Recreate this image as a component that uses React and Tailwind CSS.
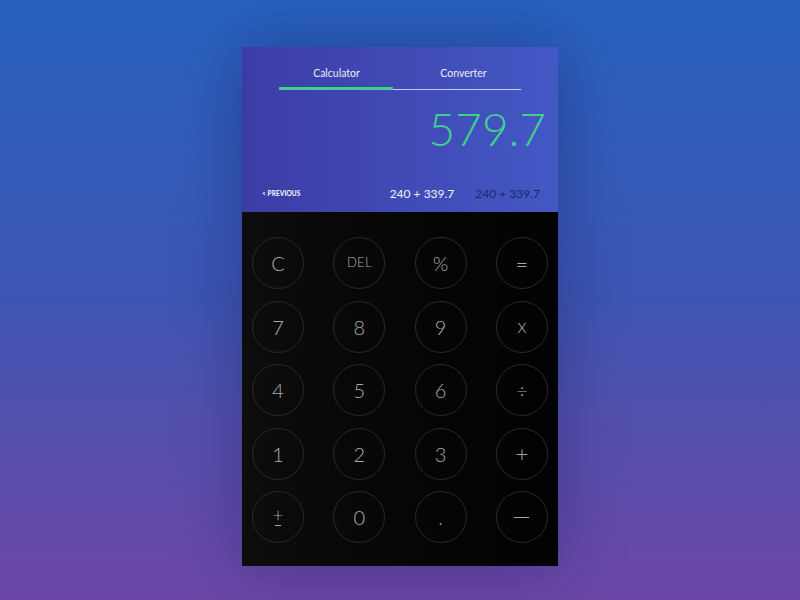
import React from 'react';

const keys = [
  ['C', 'DEL', '%', '='],
  ['7', '8', '9', 'x'],
  ['4', '5', '6', '÷'],
  ['1', '2', '3', '+'],
  ['pm', '0', '.', '−'],
];

const KeyLabel = ({ k }) => {
  if (k === 'DEL') return <span className="text-[13px] tracking-[0.3px]">DEL</span>;
  if (k === 'pm') {
    return (
      <span className="flex flex-col items-center leading-none">
        <span className="text-[19px] leading-[14px]">+</span>
        <span className="block w-[6px] h-px bg-[#a8a8a8] mt-[3px]"></span>
      </span>
    );
  }
  if (k === '−') return <span className="block w-[15px] h-px bg-[#a8a8a8]"></span>;
  if (k === 'x') return <span className="text-[19px]">x</span>;
  if (k === '=' || k === '+') return <span className="text-[22px]">{k}</span>;
  return <span className="text-[20px]">{k}</span>;
};

const Key = ({ k }) => (
  <button className="w-[52px] h-[52px] rounded-full border border-[#2a2a2a] flex items-center justify-center text-[#ababab] font-light">
    <KeyLabel k={k} />
  </button>
);

export default function App() {
  return (
    <div
      className="w-[800px] h-[600px] flex items-start justify-center pt-[47px] bg-gradient-to-b from-[#2661bf] via-[#3c55b2] to-[#6c46a6] overflow-hidden antialiased"
      style={{ fontFamily: 'Lato, "Open Sans", sans-serif' }}
    >
      <div className="w-[316px] h-[519px] flex flex-col shadow-[0_0_60px_rgba(20,20,80,0.35)]">
        {/* display */}
        <div className="h-[165px] bg-gradient-to-r from-[#3d3ca6] to-[#4358c5] flex flex-col pt-[19px]">
          <div className="w-[242px] mx-auto">
            <div className="flex text-[10.5px] text-[#ececfa]">
              <div className="flex-1 text-center leading-[14px] pr-[12px]">Calculator</div>
              <div className="flex-1 text-center leading-[14px]">Converter</div>
            </div>
            <div className="flex items-end mt-[7px] h-[3px]">
              <div className="w-[114px] h-[3px] bg-[#3fcf8e]"></div>
              <div className="flex-1 h-px bg-[#c9cbef]"></div>
            </div>
          </div>
          <div className="text-right pr-[12px] mt-[12px] text-[46px] leading-[54px] font-light text-[#3fd08f]">
            579.7
          </div>
          <div className="flex items-center mt-auto mb-[9px] pl-[20px] pr-[18px]">
            <div className="text-[6.5px] font-bold text-white tracking-[0.1px]">&lt; PREVIOUS</div>
            <div className="ml-auto text-[12px] text-[#f2f2fb]">240 + 339.7</div>
            <div className="ml-[21px] text-[12px] text-[#1e2566]">240 + 339.7</div>
          </div>
        </div>
        {/* keypad */}
        <div className="flex-1 bg-gradient-to-r from-[#0d0d0d] to-[#020202] flex flex-col gap-y-[11.5px] pt-[25px] px-[10px]">
          {keys.map((row, i) => (
            <div key={i} className="flex justify-between">
              {row.map((k) => (
                <Key key={k} k={k} />
              ))}
            </div>
          ))}
        </div>
      </div>
    </div>
  );
}
